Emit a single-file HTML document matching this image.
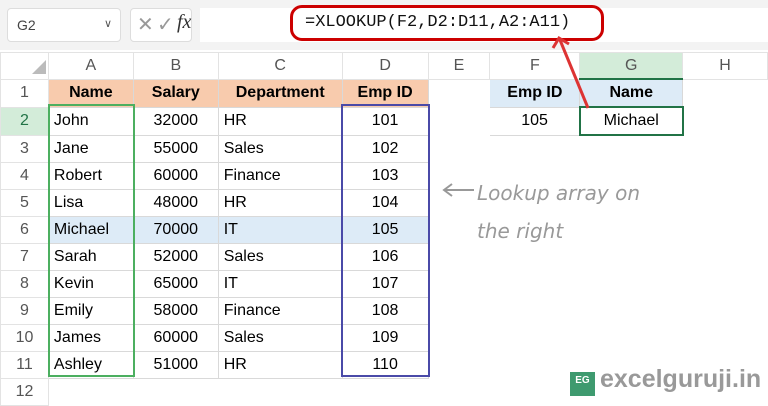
<!DOCTYPE html>
<html><head><style>
body{margin:0;width:768px;height:403px;overflow:hidden;background:#fff;font-family:"Liberation Sans",sans-serif;position:relative}
.a{position:absolute}
.top{left:0;top:0;width:768px;height:50px;background:#f3f3f3}
.box{background:#fff;border:1px solid #ddd;border-radius:4px}
table{position:absolute;left:0;top:52px;border-collapse:collapse;font-size:16px;table-layout:fixed}
td{height:26px;border:1px solid #d9d9d9;padding:0 5px;white-space:nowrap;overflow:hidden}
tr.h td{height:25px;text-align:center;color:#555;background:#fff;border-color:#e3e3e3}
td.r{text-align:center;color:#555;border-color:#e3e3e3}
.or{background:#f8cbad;font-weight:bold;text-align:center}
.bl{background:#ddebf7;font-weight:bold;text-align:center}
.n{text-align:center}
.hl td{background:#ddebf7}
.hl td.r{background:#fff}
</style></head><body>
<div class="a top"></div>
<div class="a box" style="left:7px;top:8px;width:112px;height:32px;font-size:14px;color:#444"><span style="position:absolute;left:9px;top:8px">G2</span><span style="position:absolute;right:8px;top:8px;font-size:11px;color:#555">&#8744;</span></div>
<div class="a box" style="left:130px;top:8px;width:60px;height:32px;color:#999;font-size:20px"><span style="position:absolute;left:6px;top:3px">&#10005;</span><span style="position:absolute;left:26px;top:3px">&#10003;</span><span style="position:absolute;left:46px;top:2px;font-family:'Liberation Serif';font-style:italic;color:#333">fx</span></div>
<div class="a" style="left:200px;top:8px;width:568px;height:34px;background:#fff"></div>
<div class="a" style="left:290px;top:5px;height:30px;border:3px solid #c00;border-radius:12px;font-family:'Liberation Mono',monospace;font-size:17px;color:#111;line-height:30px;padding-left:12px;box-sizing:content-box;width:296px">=XLOOKUP(F2,D2:D11,A2:A11)</div>
<table>
<colgroup><col style="width:48px"><col style="width:85px"><col style="width:85px"><col style="width:124px"><col style="width:86px"><col style="width:62px"><col style="width:90px"><col style="width:103px"><col style="width:85px"></colgroup>
<tr class="h"><td style="border-color:#e3e3e3"></td><td>A</td><td>B</td><td>C</td><td>D</td><td>E</td><td>F</td><td style="background:#d3ecd9;border-bottom:2px solid #217346">G</td><td>H</td></tr>
<tr><td class="r">1</td><td class="or">Name</td><td class="or">Salary</td><td class="or">Department</td><td class="or">Emp ID</td><td style="border-color:#fff"></td><td class="bl">Emp ID</td><td class="bl">Name</td><td style="border-color:#fff"></td></tr>
<tr><td class="r" style="background:#d3ecd9;color:#217346">2</td><td>John</td><td class="n">32000</td><td>HR</td><td class="n">101</td><td style="border-color:#fff"></td><td class="n">105</td><td class="n" style="border:2px solid #217346">Michael</td><td style="border-color:#fff"></td></tr>
<tr><td class="r">3</td><td>Jane</td><td class="n">55000</td><td>Sales</td><td class="n">102</td><td style="border-color:#fff"></td><td style="border-color:#fff"></td><td style="border-color:#fff"></td><td style="border-color:#fff"></td></tr>
<tr><td class="r">4</td><td>Robert</td><td class="n">60000</td><td>Finance</td><td class="n">103</td><td style="border-color:#fff"></td><td style="border-color:#fff"></td><td style="border-color:#fff"></td><td style="border-color:#fff"></td></tr>
<tr><td class="r">5</td><td>Lisa</td><td class="n">48000</td><td>HR</td><td class="n">104</td><td style="border-color:#fff"></td><td style="border-color:#fff"></td><td style="border-color:#fff"></td><td style="border-color:#fff"></td></tr>
<tr class="hl"><td class="r">6</td><td>Michael</td><td class="n">70000</td><td>IT</td><td class="n">105</td><td style="border-color:#fff;background:#fff"></td><td style="border-color:#fff;background:#fff"></td><td style="border-color:#fff;background:#fff"></td><td style="border-color:#fff;background:#fff"></td></tr>
<tr><td class="r">7</td><td>Sarah</td><td class="n">52000</td><td>Sales</td><td class="n">106</td><td style="border-color:#fff"></td><td style="border-color:#fff"></td><td style="border-color:#fff"></td><td style="border-color:#fff"></td></tr>
<tr><td class="r">8</td><td>Kevin</td><td class="n">65000</td><td>IT</td><td class="n">107</td><td style="border-color:#fff"></td><td style="border-color:#fff"></td><td style="border-color:#fff"></td><td style="border-color:#fff"></td></tr>
<tr><td class="r">9</td><td>Emily</td><td class="n">58000</td><td>Finance</td><td class="n">108</td><td style="border-color:#fff"></td><td style="border-color:#fff"></td><td style="border-color:#fff"></td><td style="border-color:#fff"></td></tr>
<tr><td class="r">10</td><td>James</td><td class="n">60000</td><td>Sales</td><td class="n">109</td><td style="border-color:#fff"></td><td style="border-color:#fff"></td><td style="border-color:#fff"></td><td style="border-color:#fff"></td></tr>
<tr><td class="r">11</td><td>Ashley</td><td class="n">51000</td><td>HR</td><td class="n">110</td><td style="border-color:#fff"></td><td style="border-color:#fff"></td><td style="border-color:#fff"></td><td style="border-color:#fff"></td></tr>
<tr><td class="r">12</td><td style="border-color:#fff"></td><td style="border-color:#fff"></td><td style="border-color:#fff"></td><td style="border-color:#fff"></td><td style="border-color:#fff"></td><td style="border-color:#fff"></td><td style="border-color:#fff"></td><td style="border-color:#fff"></td></tr>
</table>
<div class="a" style="left:32px;top:60px;width:0;height:0;border-left:14px solid transparent;border-bottom:14px solid #bbb"></div>
<div class="a" style="left:48px;top:104px;width:83px;height:269px;border:2px solid #4caf60"></div>
<div class="a" style="left:341px;top:104px;width:85px;height:269px;border:2px solid #4a4aa8"></div>
<svg class="a" style="left:0;top:0" width="768" height="403"><path d="M588 108 L560 40" stroke="#d33" stroke-width="3" fill="none"/><path d="M553 48 L559 38 L569 44" stroke="#d33" stroke-width="3" fill="none"/><path d="M474 190 H444 M452 184 L444 190 L452 196" stroke="#999" stroke-width="2" fill="none"/></svg>
<div class="a" style="left:477px;top:174px;font-family:'DejaVu Sans',sans-serif;font-style:italic;font-size:20px;color:#999;line-height:38px">Lookup array on<br>the right</div>
<div class="a" style="left:570px;top:372px;width:25px;height:24px;background:#3e9a6f;color:#fff;font-size:10px;font-weight:bold;text-align:center;line-height:18px">EG</div>
<div class="a" style="left:600px;top:365px;font-size:25px;font-weight:bold;color:#999">excelguruji.in</div>
</body></html>
